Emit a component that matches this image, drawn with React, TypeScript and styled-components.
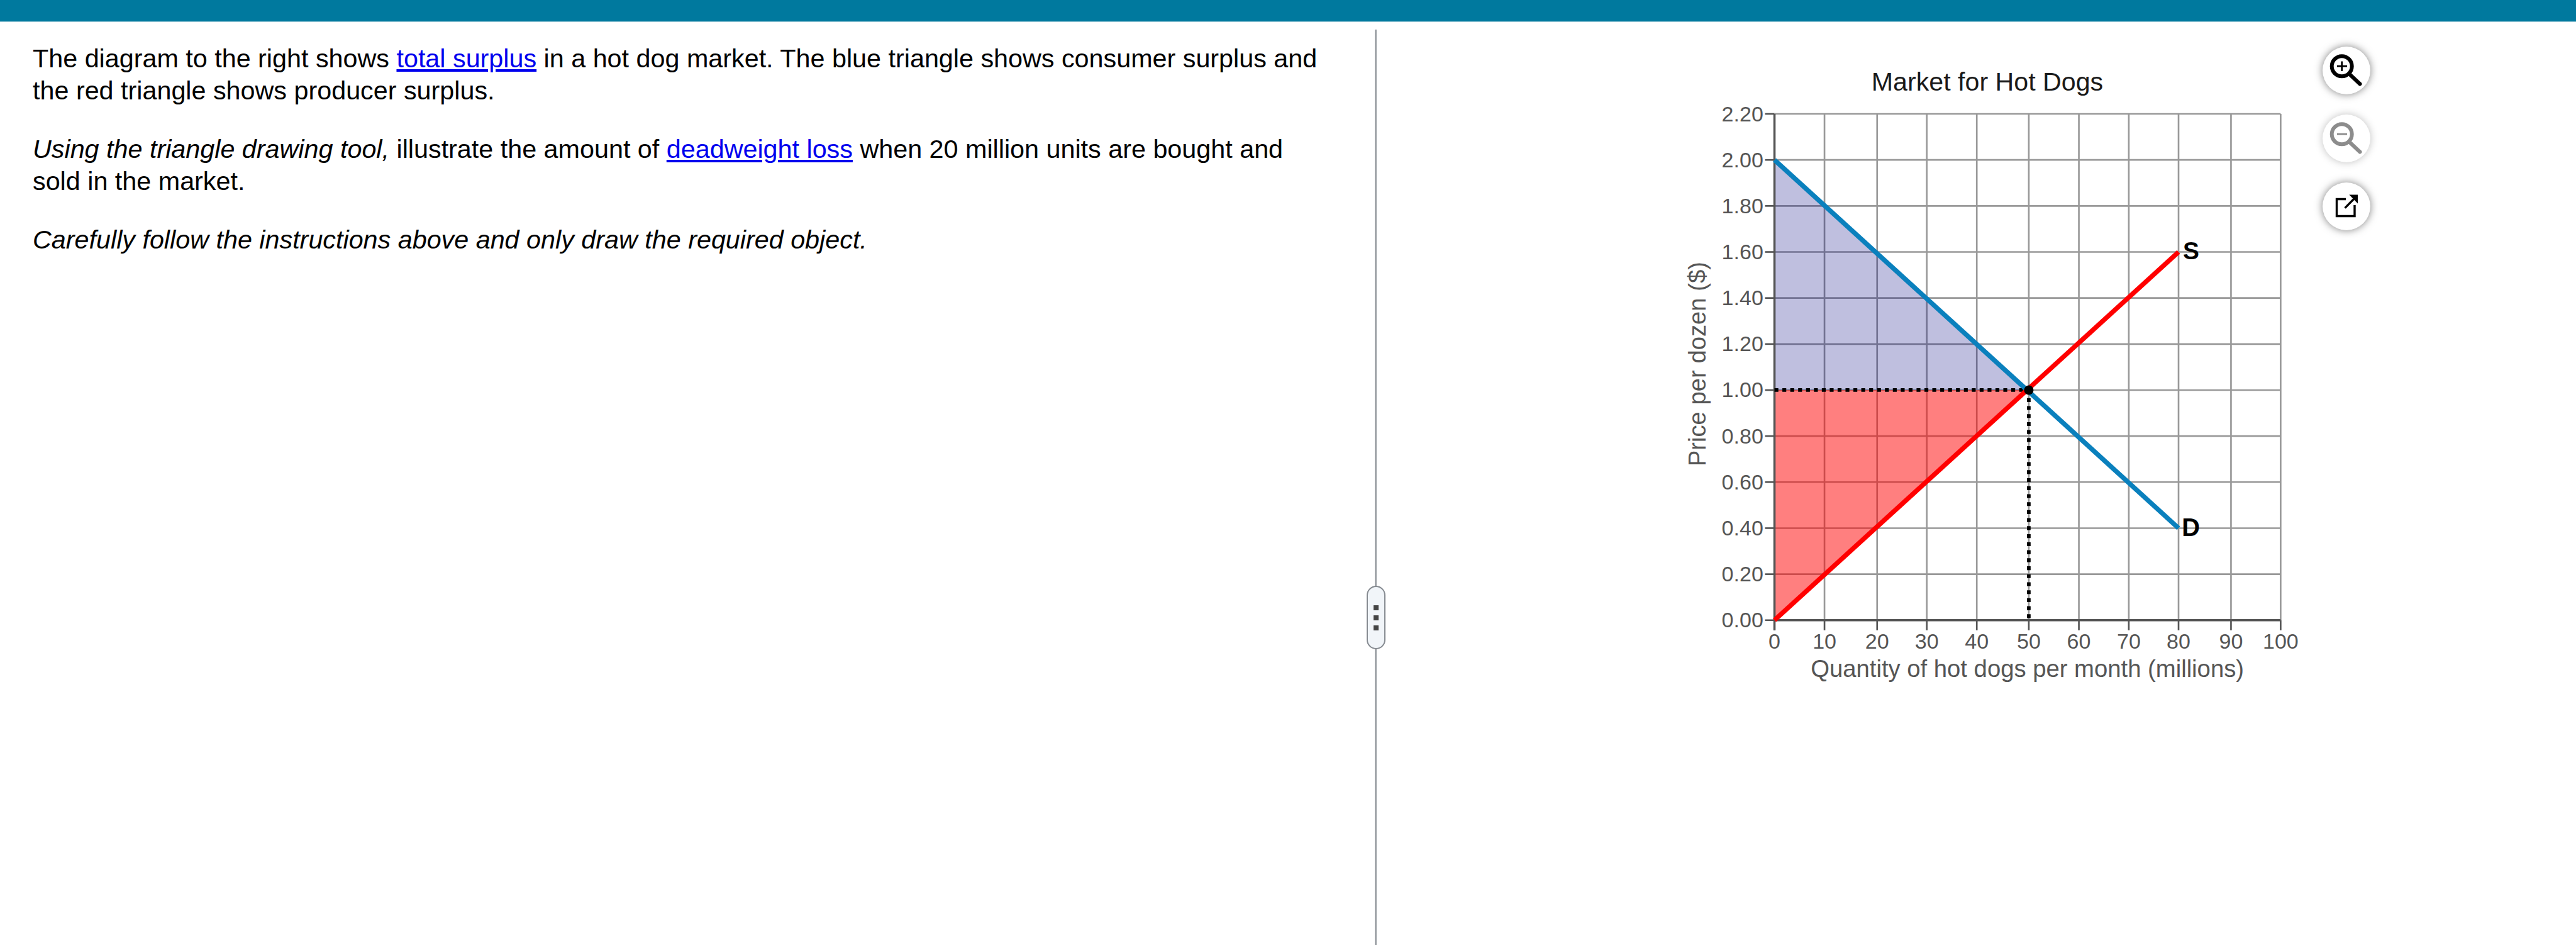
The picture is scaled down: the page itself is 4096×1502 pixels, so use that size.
import React from "react";
import styled, { createGlobalStyle } from "styled-components";

const Global = createGlobalStyle`
  html, body { margin: 0; padding: 0; background: #fff; }
  body { font-family: "Liberation Sans", Arial, sans-serif; overflow: hidden; }
`;

const Page = styled.div`
  width: 4096px;
  height: 1502px;
  display: flex;
  flex-direction: column;
  overflow: hidden;
  background: #fff;
`;

const TopBar = styled.div`
  height: 34px;
  flex: none;
  background: #00799e;
  border-bottom: 1px solid #a9cfdb;
`;

const Columns = styled.div`
  flex: 1;
  display: flex;
  min-height: 0;
`;

const Question = styled.div`
  width: 2186px;
  flex: none;
  box-sizing: border-box;
  padding: 33px 74px 0 52px;
  font-size: 41.3px;
  line-height: 51px;
  color: #000;
`;

const Paragraph = styled.p`
  margin: 0 0 42px;
`;

const Term = styled.a`
  color: #0000ee;
  text-decoration: underline;
`;

const Divider = styled.div`
  position: relative;
  flex: none;
  width: 2.5px;
  margin-top: 12px;
  background: #a0a4a9;
`;

const Handle = styled.div`
  position: absolute;
  left: -13px;
  top: 884px;
  width: 26px;
  height: 97px;
  box-sizing: content-box;
  border: 2px solid #868b91;
  border-radius: 15px;
  background: #f1f5f9;
  display: flex;
  flex-direction: column;
  align-items: center;
  justify-content: center;
  gap: 8px;
`;

const Grip = styled.span`
  width: 8px;
  height: 8px;
  background: #444;
`;

const ChartPane = styled.div`
  flex: 1;
  display: flex;
  align-items: flex-start;
  padding: 35px 0 0 454.5px;
`;

const ChartSvg = styled.svg`
  width: 1034px;
  height: 1016.6px;
  margin-top: 18.4px;
  flex: none;
  font-family: "Liberation Sans", Arial, sans-serif;
`;

const Tools = styled.div`
  display: flex;
  flex-direction: column;
  gap: 32px;
  margin-left: 15.5px;
  margin-top: 4px;
`;

const ToolButton = styled.button<{ $dim?: boolean }>`
  width: 76px;
  height: 76px;
  padding: 0;
  border: none;
  border-radius: 50%;
  background: #fff;
  color: ${(p) => (p.$dim ? "#8c8c8c" : "#000")};
  box-shadow: 0 0 13px ${(p) => (p.$dim ? "rgba(0,0,0,.25)" : "rgba(0,0,0,.5)")};
  display: flex;
  align-items: center;
  justify-content: center;
`;

const xs = [3192, 3282, 3376.7, 3466, 3556, 3649.6, 3739.7, 3829.5, 3919, 4013.4, 4102.7];
const Y0 = 1115.7;
const STEP = 82.78;
const ys = Array.from({ length: 12 }, (_, i) => Y0 - i * STEP);
const Y100 = ys[5];
const X50 = xs[5];
const X80 = xs[8];

const GRID = "#999";
const AXIS = "#555";
const LABEL = "#555";

function Chart() {
  return (
    <ChartSvg viewBox="2990 100 1170 1150" aria-label="Market for Hot Dogs chart">
      {ys.slice(1).map((y) => (
        <line key={y} x1={xs[0]} x2={xs[10]} y1={y} y2={y} stroke={GRID} strokeWidth={3} />
      ))}
      {xs.slice(1).map((x) => (
        <line key={x} x1={x} x2={x} y1={ys[11]} y2={Y0} stroke={GRID} strokeWidth={3} />
      ))}
      <polygon points={`${xs[0]},${ys[10]} ${X50},${Y100} ${xs[0]},${Y100}`} fill="#000080" fillOpacity={0.25} />
      <polygon points={`${xs[0]},${Y0} ${X50},${Y100} ${xs[0]},${Y100}`} fill="#ff0000" fillOpacity={0.5} />
      <line x1={xs[0]} x2={xs[0]} y1={ys[11]} y2={Y0 + 18} stroke={AXIS} strokeWidth={4} />
      <line x1={xs[0]} x2={xs[10]} y1={Y0} y2={Y0} stroke={AXIS} strokeWidth={4} />
      {ys.map((y) => (
        <line key={y} x1={3175} x2={xs[0]} y1={y} y2={y} stroke={AXIS} strokeWidth={3} />
      ))}
      {xs.map((x) => (
        <line key={x} x1={x} x2={x} y1={Y0} y2={Y0 + 18} stroke={AXIS} strokeWidth={3} />
      ))}
      <line x1={xs[0]} y1={Y100} x2={X50} y2={Y100} stroke="#000" strokeWidth={6.5} strokeDasharray="7 7.2" />
      <line x1={X50} y1={Y100} x2={X50} y2={Y0} stroke="#000" strokeWidth={6.5} strokeDasharray="7 7.4" />
      <line x1={xs[0]} y1={ys[10]} x2={X80} y2={ys[2]} stroke="#0a80bd" strokeWidth={8.5} />
      <line x1={xs[0]} y1={Y0} x2={X80} y2={ys[8]} stroke="#ff0000" strokeWidth={8.5} />
      <circle cx={X50} cy={Y100} r={8.5} fill="#000" />

      <text x={3575} y={163} fontSize={46.6} fill="#1a1a1a" textAnchor="middle">Market for Hot Dogs</text>
      {ys.map((y, i) => (
        <text key={i} x={3172} y={y + 13} fontSize={38.5} fill={LABEL} textAnchor="end">
          {(i * 0.2).toFixed(2)}
        </text>
      ))}
      {xs.map((x, i) => (
        <text key={i} x={x} y={1167} fontSize={38.5} fill={LABEL} textAnchor="middle">
          {i * 10}
        </text>
      ))}
      <text x={3647} y={1218} fontSize={43.3} fill={LABEL} textAnchor="middle">Quantity of hot dogs per month (millions)</text>
      <text transform="translate(3068 655) rotate(-90)" fontSize={43.3} fill={LABEL} textAnchor="middle">Price per dozen ($)</text>
      <text x={3927} y={467} fontSize={44} fontWeight="bold" fill="#000">S</text>
      <text x={3925} y={964} fontSize={45} fontWeight="bold" fill="#000">D</text>
    </ChartSvg>
  );
}

function ZoomIcon({ plus }: { plus?: boolean }) {
  return (
    <svg width="62" height="62" viewBox="0 0 62 62" fill="none" stroke="currentColor">
      <circle cx="23.7" cy="24.2" r="16" strokeWidth="6" />
      <line x1="36" y1="37" x2="52.5" y2="52.5" strokeWidth="6" strokeLinecap="round" />
      <line x1="16" y1="24.2" x2="32" y2="24.2" strokeWidth="2.8" />
      {plus && <line x1="23.7" y1="16.5" x2="23.7" y2="32" strokeWidth="2.8" />}
    </svg>
  );
}

function ExpandIcon() {
  return (
    <svg width="62" height="62" viewBox="0 0 62 62" fill="none" stroke="currentColor">
      <path d="M30 19.5H15.5V46.5H44V29" strokeWidth="3.4" />
      <line x1="28.6" y1="33.6" x2="43" y2="19" strokeWidth="3.4" />
      <path d="M35.4 12.5H49V26.6Z" fill="currentColor" stroke="none" />
    </svg>
  );
}

export default function App() {
  return (
    <Page>
      <Global />
      <TopBar />
      <Columns>
        <Question>
          <Paragraph>
            The diagram to the right shows <Term>total surplus</Term> in a hot dog market. The blue triangle shows consumer surplus and the red triangle shows producer surplus.
          </Paragraph>
          <Paragraph>
            <em>Using the triangle drawing tool,</em> illustrate the amount of <Term>deadweight loss</Term> when 20 million units are bought and sold in the market.
          </Paragraph>
          <Paragraph>
            <em>Carefully follow the instructions above and only draw the required object.</em>
          </Paragraph>
        </Question>
        <Divider>
          <Handle>
            <Grip />
            <Grip />
            <Grip />
          </Handle>
        </Divider>
        <ChartPane>
          <Chart />
          <Tools>
            <ToolButton aria-label="Zoom in"><ZoomIcon plus /></ToolButton>
            <ToolButton $dim aria-label="Zoom out"><ZoomIcon /></ToolButton>
            <ToolButton aria-label="Open in new window"><ExpandIcon /></ToolButton>
          </Tools>
        </ChartPane>
      </Columns>
    </Page>
  );
}
